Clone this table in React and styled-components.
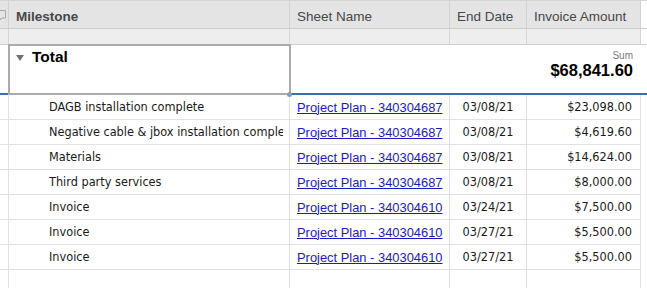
import React from "react";
import styled, { createGlobalStyle } from "styled-components";

const Global = createGlobalStyle`
  html, body { margin: 0; padding: 0; background: #fff; }
  body { font-family: "Liberation Sans", Arial, sans-serif; }
`;

const COLS = "9px 281px 160px 77px 114px 1fr";

const Sheet = styled.div`
  width: 647px;
  height: 288px;
  overflow: hidden;
  background: #fff;
`;

const HeaderRow = styled.div`
  display: grid;
  grid-template-columns: ${COLS};
  height: 29px;
  box-sizing: border-box;
  border-top: 1px solid #d4d4d4;
  border-bottom: 1px solid #cdcdcd;
`;

const HeadCell = styled.div`
  box-sizing: border-box;
  background: ${(p) => (p.$filler ? "#fff" : "#e4e4e4")};
  border-right: ${(p) => (p.$filler ? "none" : "1px solid #d2d2d2")};
  padding: 8px 0 0 7px;
  font-size: 13.5px;
  line-height: 16px;
  color: #474747;
  font-weight: ${(p) => (p.$bold ? 700 : 400)};
  white-space: nowrap;
  overflow: hidden;
  position: relative;
`;

const StubIcon = styled.svg`
  position: absolute;
  left: 0;
  top: 8px;
`;

const FilterRow = styled.div`
  display: grid;
  grid-template-columns: ${COLS};
  height: 16px;
  box-sizing: border-box;
  border-bottom: 1px solid #cdcdcd;
`;

const FilterCell = styled.div`
  box-sizing: border-box;
  background: ${(p) => (p.$filler ? "#fff" : "#eeeeee")};
  border-right: ${(p) => (p.$filler ? "none" : "1px solid #d6d6d6")};
`;

const TotalRow = styled.div`
  display: grid;
  grid-template-columns: ${COLS};
  height: 50px;
  box-sizing: border-box;
  border-bottom: 2px solid #3a6fae;
`;

const TotalLabelCell = styled.div`
  position: relative;
  z-index: 1;
  margin: -1px -1px -2px -1px;
  box-shadow: inset 0 0 0 2px #ababab;
  background: #fff;
  display: flex;
  align-items: flex-start;
  gap: 8px;
  padding: 4px 0 0 8px;
`;

const Caret = styled.span`
  width: 0;
  height: 0;
  margin-top: 7px;
  border-left: 4.5px solid transparent;
  border-right: 4.5px solid transparent;
  border-top: 6px solid #727272;
`;

const TotalLabel = styled.span`
  font-size: 15.5px;
  line-height: 18px;
  font-weight: 700;
  color: #000;
`;

const Handle = styled.span`
  position: absolute;
  right: -1px;
  bottom: -2px;
  width: 5px;
  height: 5px;
  border-radius: 50%;
  background: #8f9bb0;
`;

const TotalSum = styled.div`
  grid-column: span 3;
  display: flex;
  flex-direction: column;
  align-items: flex-end;
  padding: 5px 8px 0 0;
`;

const SumCaption = styled.span`
  font-size: 10px;
  line-height: 11px;
  color: #7a7a7a;
`;

const SumValue = styled.span`
  font-size: 16.5px;
  line-height: 19px;
  font-weight: 700;
  color: #000;
`;

const Row = styled.div`
  display: grid;
  grid-template-columns: ${COLS};
  height: ${(p) => (p.$fill ? "40px" : "25px")};
`;

const Cell = styled.div`
  box-sizing: border-box;
  border-right: ${(p) => (p.$filler ? "none" : "1px solid #e2e2e2")};
  border-bottom: ${(p) => (p.$filler || p.$open ? "none" : "1px solid #e2e2e2")};
  display: flex;
  align-items: center;
  justify-content: ${(p) =>
    p.$align === "right" ? "flex-end" : p.$align === "center" ? "center" : "flex-start"};
  padding: 0 ${(p) => (p.$align === "right" ? "8px" : p.$indent ? "6px" : "0")} 0
    ${(p) => (p.$indent ? "40px" : p.$align ? "0" : "7px")};
  font-family: "DejaVu Sans Condensed", "DejaVu Sans", sans-serif;
  font-stretch: condensed;
  font-size: 12.6px;
  line-height: 14px;
  color: #1a1a1a;
  white-space: nowrap;
  overflow: hidden;
`;

const CellText = styled.span`
  display: block;
  overflow: hidden;
  white-space: nowrap;
`;

const SheetLink = styled.a`
  font-family: "Liberation Sans", Arial, sans-serif;
  font-stretch: normal;
  font-size: 12.9px;
  line-height: 15px;
  color: #1a1ac2;
  text-decoration: underline;
  cursor: pointer;
`;

const rows = [
  ["DAGB installation complete", "Project Plan - 340304687", "03/08/21", "$23,098.00"],
  ["Negative cable & jbox installation complete", "Project Plan - 340304687", "03/08/21", "$4,619.60"],
  ["Materials", "Project Plan - 340304687", "03/08/21", "$14,624.00"],
  ["Third party services", "Project Plan - 340304687", "03/08/21", "$8,000.00"],
  ["Invoice", "Project Plan - 340304610", "03/24/21", "$7,500.00"],
  ["Invoice", "Project Plan - 340304610", "03/27/21", "$5,500.00"],
  ["Invoice", "Project Plan - 340304610", "03/27/21", "$5,500.00"],
];

export default function App() {
  return (
    <>
      <Global />
      <Sheet>
        <HeaderRow>
          <HeadCell>
            <StubIcon width="8" height="12" viewBox="0 0 8 12">
              <path d="M-4 1.5 H5.5 V9 H2 L0 11 V9 H-4 Z" fill="none" stroke="#a8a8a8" strokeWidth="1" />
            </StubIcon>
          </HeadCell>
          <HeadCell $bold>Milestone</HeadCell>
          <HeadCell>Sheet Name</HeadCell>
          <HeadCell>End Date</HeadCell>
          <HeadCell>Invoice Amount</HeadCell>
          <HeadCell $filler />
        </HeaderRow>
        <FilterRow>
          <FilterCell />
          <FilterCell />
          <FilterCell />
          <FilterCell />
          <FilterCell />
          <FilterCell $filler />
        </FilterRow>
        <TotalRow>
          <div />
          <TotalLabelCell>
            <Caret />
            <TotalLabel>Total</TotalLabel>
            <Handle />
          </TotalLabelCell>
          <TotalSum>
            <SumCaption>Sum</SumCaption>
            <SumValue>$68,841.60</SumValue>
          </TotalSum>
          <div />
        </TotalRow>
        {rows.map((r, i) => (
          <Row key={i}>
            <Cell />
            <Cell $indent>
              <CellText>{r[0]}</CellText>
            </Cell>
            <Cell>
              <SheetLink>{r[1]}</SheetLink>
            </Cell>
            <Cell $align="center">{r[2]}</Cell>
            <Cell $align="right">{r[3]}</Cell>
            <Cell $filler />
          </Row>
        ))}
        <Row $fill>
          <Cell $open />
          <Cell $open />
          <Cell $open />
          <Cell $open />
          <Cell $open />
          <Cell $filler />
        </Row>
      </Sheet>
    </>
  );
}
